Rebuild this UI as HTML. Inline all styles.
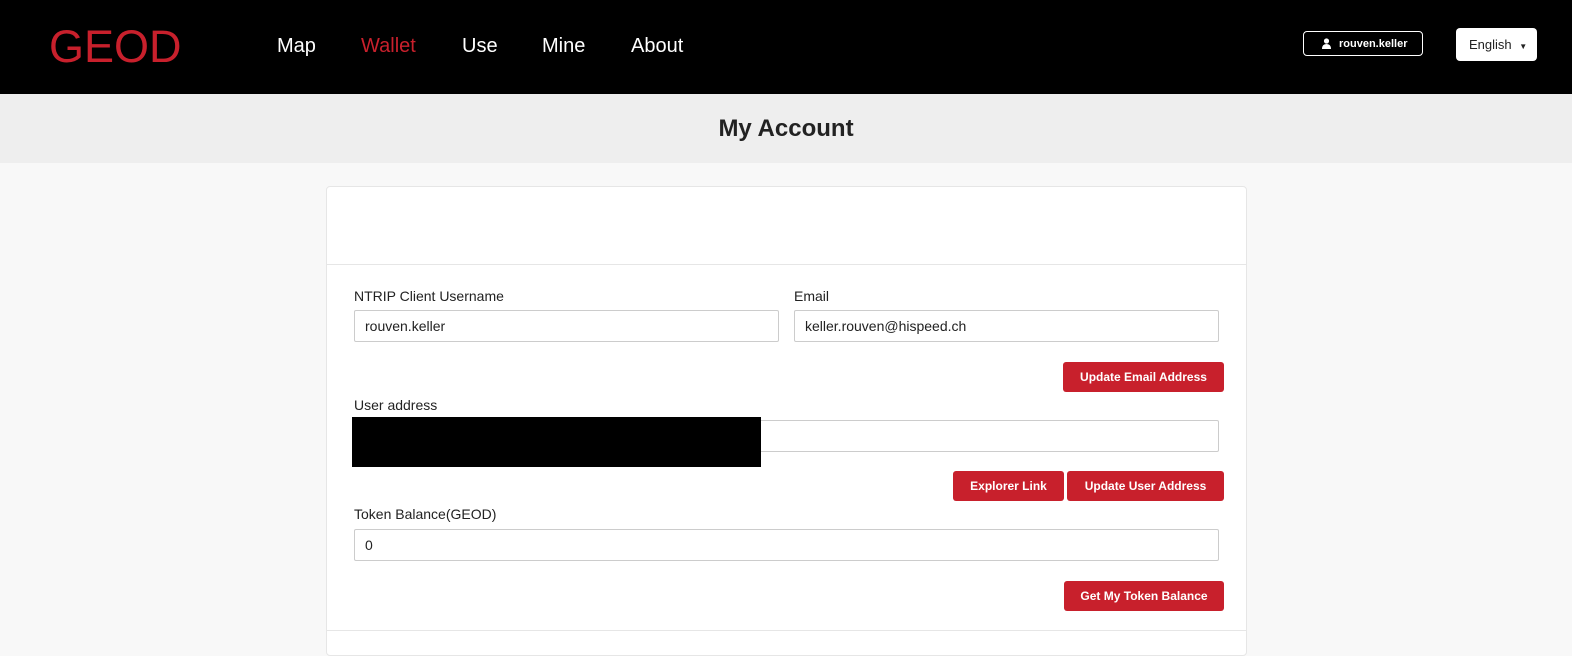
<!DOCTYPE html>
<html><head><style>
*{box-sizing:border-box;margin:0;padding:0}
body{width:1572px;height:646px;overflow:hidden;background:#f8f8f8;font-family:"Liberation Sans",sans-serif;position:relative}
.nav{position:absolute;left:0;top:0;width:1572px;height:94px;background:#000}
.logo{position:absolute;left:49px;top:22px;color:#c8202c;font-size:45px;line-height:50px}
.nl{position:absolute;top:34px;font-size:20px;color:#fff;line-height:24px}
.user{position:absolute;left:1303px;top:31px;width:120px;height:25px;border:1px solid #fff;border-radius:4px;color:#fff;font-size:11px;font-weight:bold;line-height:25px;padding-left:35px}
.lang{position:absolute;left:1456px;top:28px;width:81px;height:33px;background:#fff;border-radius:4px;font-size:13px;line-height:33px;padding-left:13px;color:#222}
.hdr{position:absolute;left:0;top:94px;width:1572px;height:69px;background:#eee;text-align:center;font-size:24px;font-weight:bold;line-height:69px;color:#222}
.card{position:absolute;left:326px;top:186px;width:921px;height:470px;background:#fff;border:1px solid #e6e6e6;border-radius:4px}
.sep{position:absolute;left:0;width:919px;height:1px;background:#e6e6e6}
.lbl{position:absolute;font-size:14px;color:#222}
.in{position:absolute;height:32px;border:1px solid #ccc;border-radius:2px;font-size:14px;line-height:31px;padding-left:10px;color:#222}
.btn{position:absolute;height:30px;background:#c8202c;color:#fff;font-size:12px;font-weight:bold;text-align:center;line-height:30px;border-radius:3px}
</style></head><body>
<div class="nav">
<div class="logo">GEOD</div>
<div class="nl" style="left:277px">Map</div>
<div class="nl" style="left:361px;color:#c8202c">Wallet</div>
<div class="nl" style="left:462px">Use</div>
<div class="nl" style="left:542px">Mine</div>
<div class="nl" style="left:631px">About</div>
<div class="user"><svg style="position:absolute;left:17px;top:6px" width="11" height="11" viewBox="0 0 11 11"><circle cx="5.5" cy="3" r="2.6" fill="#fff"/><path d="M1 11 Q1 6 5.5 6 Q10 6 10 11Z" fill="#fff"/></svg>rouven.keller</div>
<div class="lang">English <span style="font-size:8px;margin-left:4px">▼</span></div>
</div>
<div class="hdr">My Account</div>
<div class="card">
<div class="sep" style="top:77px"></div>
<div class="sep" style="top:443px"></div>
<div class="lbl" style="left:27px;top:101px">NTRIP Client Username</div>
<div class="in" style="left:27px;top:123px;width:425px">rouven.keller</div>
<div class="lbl" style="left:467px;top:101px">Email</div>
<div class="in" style="left:467px;top:123px;width:425px">keller.rouven@hispeed.ch</div>
<div class="btn" style="left:736px;top:175px;width:161px">Update Email Address</div>
<div class="lbl" style="left:27px;top:210px">User address</div>
<div class="in" style="left:27px;top:233px;width:865px"></div>
<div style="position:absolute;left:25px;top:230px;width:409px;height:50px;background:#000"></div>
<div class="btn" style="left:626px;top:284px;width:111px">Explorer Link</div>
<div class="btn" style="left:740px;top:284px;width:157px">Update User Address</div>
<div class="lbl" style="left:27px;top:319px">Token Balance(GEOD)</div>
<div class="in" style="left:27px;top:342px;width:865px">0</div>
<div class="btn" style="left:737px;top:394px;width:160px">Get My Token Balance</div>
</div>
</body></html>
